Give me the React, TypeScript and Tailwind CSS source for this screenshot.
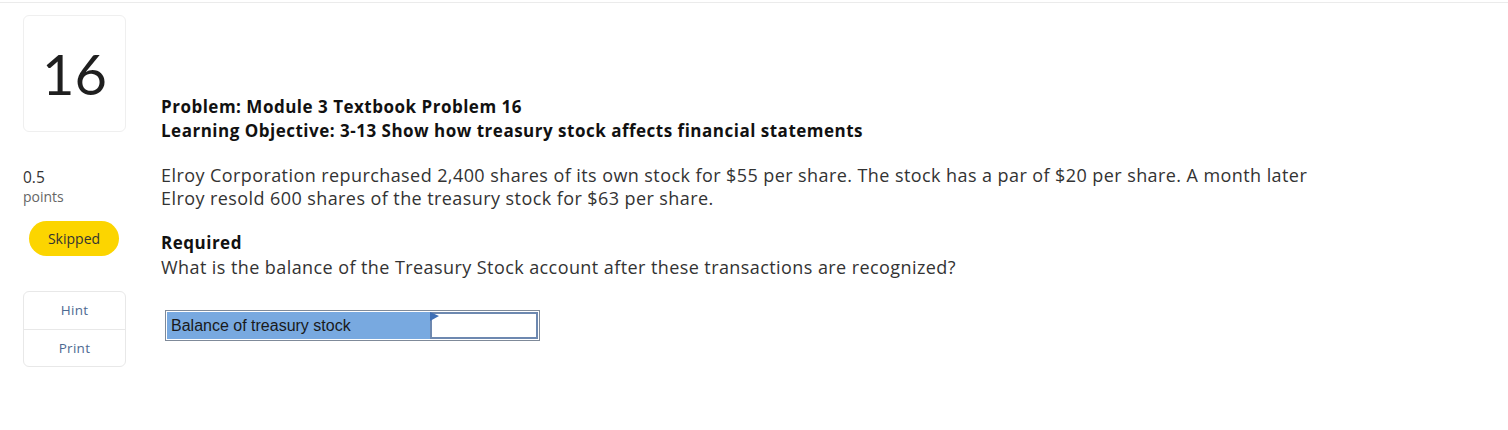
import React from 'react';

const font = { fontFamily: '"Open Sans", Lato, sans-serif' };

const App: React.FC = () => {
  return (
    <div className="min-h-screen bg-white text-[#222]" style={font}>
      <div className="h-[2px]" />
      <div className="border-t border-[#ebebeb]" />
      <div className="flex pl-[23px] pt-[12px]">
        {/* Left column */}
        <div className="w-[103px] flex flex-col">
          <div className="h-[117px] rounded-md border border-[#efefef] flex items-center justify-center">
            <span className="text-[56px] leading-none text-[#1f1f1f] font-normal" style={{ fontFamily: 'Lato, sans-serif' }}>16</span>
          </div>
          <div className="mt-[35px] text-[15.5px] leading-[20px] text-[#333]">0.5</div>
          <div className="mt-[2px] text-[14px] leading-[16px] text-[#666]">points</div>
          <div className="mt-[16px] ml-[6px] w-[90px] h-[35px] rounded-full bg-[#fcd500] flex items-center justify-center text-[14px] text-[#333]">
            Skipped
          </div>
          <div className="mt-[35px] rounded-md border border-[#e8e8e8] text-[13.5px] text-[#4d6a92] tracking-[0.3px]">
            <div className="h-[38px] flex items-center justify-center border-b border-[#e8e8e8]">Hint</div>
            <div className="h-[36px] flex items-center justify-center">Print</div>
          </div>
        </div>

        {/* Main content */}
        <div className="ml-[35px] pt-[80px] text-[18px] tracking-[0.42px]">
          <div className="font-bold text-[17px] leading-[24px] text-[#111] tracking-[0.5px]">
            <div>Problem: Module 3 Textbook Problem 16</div>
            <div>Learning Objective: 3-13 Show how treasury stock affects financial statements</div>
          </div>
          <p className="mt-[21px] leading-[23px] text-[#333]">
            Elroy Corporation repurchased 2,400 shares of its own stock for $55 per share. The stock has a par of $20 per share. A month later
            <br />
            Elroy resold 600 shares of the treasury stock for $63 per share.
          </p>
          <div className="mt-[22px] font-bold text-[17px] leading-[22px] text-[#111] tracking-[0.5px]">Required</div>
          <div className="mt-[1px] leading-[24px] text-[#333]">
            What is the balance of the Treasury Stock account after these transactions are recognized?
          </div>
          <div className="mt-[31px] ml-[4px] inline-flex border border-[#7f8a99] p-px tracking-normal">
            <div
              className="w-[263px] h-[27px] bg-[#78a9e0] flex items-center pl-[4px] text-[16px] text-[#1a1a1a]"
              style={{ fontFamily: '"Liberation Sans", Arial, sans-serif' }}
            >
              Balance of treasury stock
            </div>
            <div className="relative w-[108px] h-[27px] bg-white border-2 border-[#6d88b0]">
              <svg className="absolute -left-[2px] -top-[2px]" width="9" height="9" viewBox="0 0 9 9">
                <path d="M0 0 L9 4 L0 9 Z" fill="#3f6fb5" />
              </svg>
            </div>
          </div>
        </div>
      </div>
    </div>
  );
};

export default App;
